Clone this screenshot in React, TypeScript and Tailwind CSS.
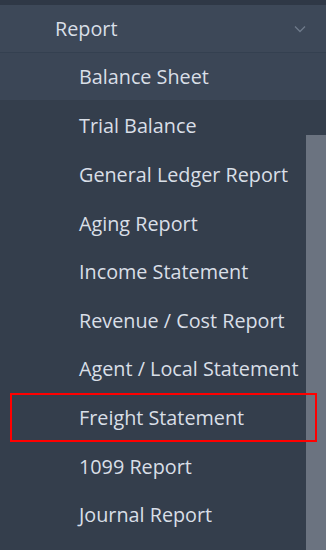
import React from 'react';

const items = [
  'Trial Balance',
  'General Ledger Report',
  'Aging Report',
  'Income Statement',
  'Revenue / Cost Report',
  'Agent / Local Statement',
  'Freight Statement',
  '1099 Report',
  'Journal Report',
];

export default function App() {
  return (
    <div
      className="relative w-[326px] h-[550px] overflow-hidden bg-[#343e4c] text-[#d9dfe7]"
      style={{ fontFamily: '"Open Sans", sans-serif' }}
    >
      <div className="h-[5px] bg-[#2f3846]" />
      {/* Report header */}
      <div className="h-[48px] flex items-center justify-between bg-[#3d4858] border-b border-[#344050] pl-[55px] pr-[20px]">
        <span className="text-[19.8px]">Report</span>
        <svg width="12" height="8" viewBox="0 0 12 8" fill="none" className="text-[#6e7a8a]">
          <path d="M1 1.5l5 5 5-5" stroke="currentColor" strokeWidth="1.3" />
        </svg>
      </div>
      <div className="h-[47px] flex items-center bg-[#3b4656] pl-[79px]">
        <span className="text-[19.8px]">Balance Sheet</span>
      </div>

      <div className="flex">
        <div className="flex-1 flex flex-col pt-[2px]">
          {items.map((label) => (
            <div key={label} className="h-[48.6px] flex items-center pl-[79px] whitespace-nowrap">
              <span className="text-[19.8px]">{label}</span>
            </div>
          ))}
        </div>
      </div>

      {/* scrollbar */}
      <div className="absolute left-[306px] top-[135px] w-[20px] h-[415px] bg-[#6b7380]" />

      {/* highlight box */}
      <div className="absolute left-[10px] top-[393px] w-[307px] h-[49px] border-2 border-[#ff0000]" />
    </div>
  );
}
